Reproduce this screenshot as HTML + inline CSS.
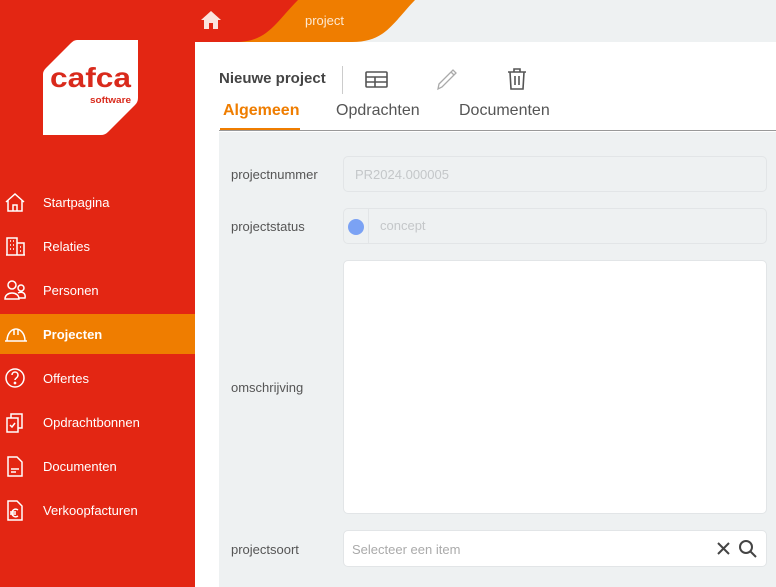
<!DOCTYPE html>
<html><head><meta charset="utf-8"><style>
*{margin:0;padding:0;box-sizing:border-box}
body{width:776px;height:587px;overflow:hidden;background:#eef1f2;font-family:"Liberation Sans",Arial,sans-serif;position:relative}
.side{position:absolute;left:0;top:0;width:195px;height:587px;background:#e32613}
.nav{position:absolute;left:0;width:195px;height:40px;color:#fff;font-size:13px;display:flex;align-items:center}
.nav span{position:absolute;left:43px}
.nav svg{position:absolute;left:4px;top:9px}
.nav.act{background:#ef7d00;font-weight:bold}
.panel{position:absolute;left:195px;top:42px;width:581px;height:545px;background:#fff}
.form{position:absolute;left:219px;top:132px;width:557px;height:455px;background:#eef1f2}
.lbl{position:absolute;left:231px;font-size:13px;color:#555}
.inp{position:absolute;left:343px;width:424px;border:1px solid #e2e5e7;border-radius:5px}
</style></head><body>
<div class="side"></div>
<svg style="position:absolute;left:0;top:0" width="776" height="42">
<rect x="195" y="0" width="581" height="42" fill="#eef1f2"/>
<path d="M250,0 H415 C392,24 385,42 352,42 H200 Z" fill="#ef7d00"/>
<path d="M0,0 H298 C276,22 268,41 238,42 H0 Z" fill="#e32613"/>
<path d="M201,20 L211,11 L221,20 H218 V29 H213 V23 H209 V29 H204 V20 Z" fill="#fbe3dd"/>
<text x="305" y="25" fill="#fde8d0" font-size="13" font-family="Liberation Sans">project</text>
</svg>
<svg style="position:absolute;left:43px;top:40px" width="96" height="96">
<path d="M34,0 H95 V58 Q95,62 92,65 L65,92 Q62,95 58,95 H0 V34 Q0,31 3,28 L28,3 Q31,0 34,0 Z" fill="#fff"/>
<text x="7" y="47" font-size="28" font-weight="bold" fill="#d92a1c" font-family="Liberation Sans" textLength="81" lengthAdjust="spacingAndGlyphs">cafca</text>
<text x="47" y="63" font-size="9.5" font-weight="bold" fill="#d92a1c" font-family="Liberation Sans" textLength="41" lengthAdjust="spacingAndGlyphs">software</text>
</svg>
<div class="nav" style="top:182px"><svg width="22" height="22" fill="none" stroke="#fff" stroke-width="1.5"><path d="M2,11 L11,3 L20,11 M4,9 V20 H18 V9 M9,20 V14 H13 V20"/></svg><span>Startpagina</span></div>
<div class="nav" style="top:226px"><svg width="22" height="22" fill="none" stroke="#fff" stroke-width="1.5"><path d="M3,20 V3 H13 V20 M13,8 H20 V20 M2,20 H21 M6,6h1M9,6h1M6,10h1M9,10h1M6,14h1M9,14h1M16,12h1M16,16h1"/></svg><span>Relaties</span></div>
<div class="nav" style="top:270px"><svg width="22" height="22" fill="none" stroke="#fff" stroke-width="1.5"><circle cx="8" cy="6" r="4"/><circle cx="17" cy="9" r="3"/><path d="M1,20 C1,12 15,12 15,20 Z M14,14 C18,12 22,14 21,19 H15"/></svg><span>Personen</span></div>
<div class="nav act" style="top:314px"><svg width="24" height="22" fill="none" stroke="#fff" stroke-width="1.5"><path d="M1,18 H23 M3,18 C3,10 8,6 12,6 C16,6 21,10 21,18 M10,6 V12 M14,6 V12"/></svg><span>Projecten</span></div>
<div class="nav" style="top:358px"><svg width="22" height="22" fill="none" stroke="#fff" stroke-width="1.5"><circle cx="11" cy="11" r="9"/><path d="M8,8 C8,4 14,4 14,8 C14,11 11,11 11,13"/><circle cx="11" cy="16" r=".6"/></svg><span>Offertes</span></div>
<div class="nav" style="top:402px"><svg width="22" height="22" fill="none" stroke="#fff" stroke-width="1.5"><path d="M3,7 H14 V21 H3 Z M7,7 V3 H18 V17 H14 M6,14 L8,16 L11,12"/></svg><span>Opdrachtbonnen</span></div>
<div class="nav" style="top:446px"><svg width="22" height="22" fill="none" stroke="#fff" stroke-width="1.5"><path d="M4,2 H13 L18,7 V21 H4 Z M7,14 H15 M7,17 H12"/></svg><span>Documenten</span></div>
<div class="nav" style="top:490px"><svg width="22" height="22" fill="none" stroke="#fff" stroke-width="1.5"><path d="M4,2 H13 L18,7 V21 H4 Z M14,11 C11,9 8,11 8,14 C8,17 11,19 14,17 M6,13 H12 M6,15 H12"/></svg><span>Verkoopfacturen</span></div>

<div class="panel"></div>
<div style="position:absolute;left:219px;top:70px;font-size:15px;font-weight:bold;color:#444">Nieuwe project</div>
<div style="position:absolute;left:342px;top:66px;width:1px;height:28px;background:#ccc"></div>
<svg style="position:absolute;left:364px;top:70px" width="26" height="20" fill="none" stroke="#555" stroke-width="1.6"><rect x="2" y="2" width="21" height="15" rx="1"/><path d="M2,7 H23 M2,12 H23 M11,7 V17"/></svg>
<svg style="position:absolute;left:434px;top:67px" width="26" height="26" fill="none" stroke="#aaa" stroke-width="1.3"><path d="M4,22 L5,17 L19,3 L22,6 L8,20 Z M17,5 L20,8"/></svg>
<svg style="position:absolute;left:505px;top:67px" width="24" height="26" fill="none" stroke="#555" stroke-width="1.6"><path d="M3,5 H21 M9,5 V2 H15 V5 M5,5 L6,22 H18 L19,5 M10,9 V18 M14,9 V18"/></svg>
<div style="position:absolute;left:223px;top:102px;font-size:16px;font-weight:bold;color:#ef7d00">Algemeen</div>
<div style="position:absolute;left:220px;top:128px;width:80px;height:3px;background:#ef7d00"></div>
<div style="position:absolute;left:336px;top:102px;font-size:16px;color:#555">Opdrachten</div>
<div style="position:absolute;left:459px;top:102px;font-size:16px;color:#555">Documenten</div>
<div style="position:absolute;left:219px;top:130px;width:557px;height:1px;background:#999"></div>
<div class="form"></div>

<div class="lbl" style="top:167px">projectnummer</div>
<div class="inp" style="top:156px;height:36px;font-size:13px;color:#c4c7c9;padding:10px 11px">PR2024.000005</div>
<div class="lbl" style="top:219px">projectstatus</div>
<div class="inp" style="top:208px;height:36px"><div style="position:absolute;left:4px;top:10px;width:16px;height:16px;border-radius:50%;background:#7ba2f4"></div><div style="position:absolute;left:24px;top:0;width:1px;height:34px;background:#e2e5e7"></div><div style="position:absolute;left:36px;top:9px;font-size:13px;color:#c4c7c9">concept</div></div>
<div class="lbl" style="top:380px">omschrijving</div>
<div class="inp" style="top:260px;height:254px;background:#fff"></div>
<div class="lbl" style="top:542px">projectsoort</div>
<div class="inp" style="top:530px;height:37px;background:#fff;font-size:13px;color:#aaa;padding:11px 8px">Selecteer een item
<svg style="position:absolute;left:372px;top:10px" width="16" height="16" stroke="#444" stroke-width="2"><path d="M2,2 L13,13 M13,2 L2,13"/></svg>
<svg style="position:absolute;left:394px;top:8px" width="20" height="20" fill="none" stroke="#444" stroke-width="2"><circle cx="8" cy="8" r="6"/><path d="M12.5,12.5 L18,18"/></svg>
</div>
</body></html>
